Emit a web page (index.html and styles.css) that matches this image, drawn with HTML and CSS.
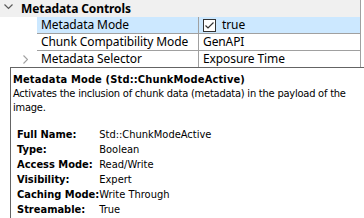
FILE: index.html
```html
<!DOCTYPE html>
<html>
<head>
<meta charset="utf-8">
<link rel="stylesheet" href="styles.css">
</head>
<body>
<div class="grid">
  <div class="cat">
    <span class="cat-chev"><svg width="9" height="6" viewBox="0 0 9 6"><path d="M0.5 0.5 L4.5 4.5 L8.5 0.5" fill="none" stroke="#5a5a5a" stroke-width="1.2"/></svg></span>
    <span class="cat-title">Metadata Controls</span>
  </div>
  <div class="row">
    <div class="margin"></div>
    <div class="name sel">Metadata Mode</div>
    <div class="val sel"><span class="cb"><svg width="13" height="13" viewBox="0 0 13 13"><rect x="0.5" y="0.5" width="12" height="12" fill="#fff" stroke="#333"/><path d="M2.5 6.5 L5 9 L10.5 3.5" fill="none" stroke="#333" stroke-width="1.2"/></svg></span>true</div>
  </div>
  <div class="row">
    <div class="margin"></div>
    <div class="name">Chunk Compatibility Mode</div>
    <div class="val">GenAPI</div>
  </div>
  <div class="row last">
    <div class="margin"><svg class="exp" width="5" height="9" viewBox="0 0 5 9"><path d="M0.5 0.5 L4.5 4.5 L0.5 8.5" fill="none" stroke="#a0a0a0" stroke-width="1.1"/></svg></div>
    <div class="name">Metadata Selector</div>
    <div class="val">Exposure Time</div>
  </div>
</div>
<div class="tip">
  <div class="tip-title">Metadata Mode (Std::ChunkModeActive)</div>
  <div class="tip-desc">Activates the inclusion of chunk data (metadata) in the payload of the image.</div>
  <table class="props">
    <tr><th>Full Name:</th><td>Std::ChunkModeActive</td></tr>
    <tr><th>Type:</th><td>Boolean</td></tr>
    <tr><th>Access Mode:</th><td>Read/Write</td></tr>
    <tr><th>Visibility:</th><td>Expert</td></tr>
    <tr><th>Caching Mode:</th><td>Write Through</td></tr>
    <tr><th>Streamable:</th><td>True</td></tr>
  </table>
</div>
</body>
</html>
```
FILE: styles.css
```css
html, body {
  margin: 0;
  padding: 0;
  background: #ffffff;
  width: 364px;
  height: 218px;
  overflow: hidden;
}
body {
  font-family: "Noto Sans", "Open Sans", sans-serif;
  color: #000;
}
.grid {
  width: 360px;
  border-right: 1px solid #a0a0a0;
  font-size: 12px;
  letter-spacing: -0.1px;
}
.cat {
  height: 17px;
  background: #f0f0f0;
  display: flex;
  align-items: center;
}
.cat-chev {
  width: 21px;
  display: flex;
  justify-content: flex-start;
  padding-left: 4px;
  box-sizing: border-box;
  margin-top: -3px;
}
.cat-title {
  font-weight: bold;
  line-height: 16px;
}
.row {
  display: flex;
  height: 17px;
  line-height: 16px;
}
.row.last {
  height: 16px;
}
.row .margin {
  width: 37px;
  display: flex;
  align-items: center;
  justify-content: flex-start;
  padding-left: 23px;
  box-sizing: border-box;
}
.row .name {
  width: 161px;
  padding-left: 4px;
  box-sizing: border-box;
  border-bottom: 1px solid #a0a0a0;
  white-space: nowrap;
  overflow: hidden;
}
.row .val {
  flex: 1;
  border-left: 1px solid #a0a0a0;
  border-bottom: 1px solid #a0a0a0;
  padding-left: 4px;
  display: flex;
  align-items: center;
  white-space: nowrap;
}
.row.last .name, .row.last .val {
  border-bottom: none;
}
.sel {
  background: #cce8ff;
}
.cb {
  display: flex;
  margin-right: 6px;
}
.tip {
  margin-left: 10px;
  border-top: 1px solid #646464;
  border-left: 1px solid #646464;
  background: #fff;
  height: 151px;
  box-sizing: border-box;
  padding: 5px 0 0 2px;
  font-family: "DejaVu Sans Condensed", "DejaVu Sans", sans-serif;
  font-size: 11px;
  line-height: 14px;
  overflow: hidden;
}
.tip-title {
  font-weight: bold;
  letter-spacing: 0.15px;
}
.tip-desc {
  width: 346px;
  letter-spacing: -0.22px;
  margin-bottom: 12px;
}
.props {
  border-collapse: collapse;
  margin-left: 4px;
}
.props th {
  text-align: left;
  font-weight: bold;
  padding: 0;
  white-space: nowrap;
  line-height: 15px;
}
.props td {
  padding: 0;
  line-height: 15px;
}
```
